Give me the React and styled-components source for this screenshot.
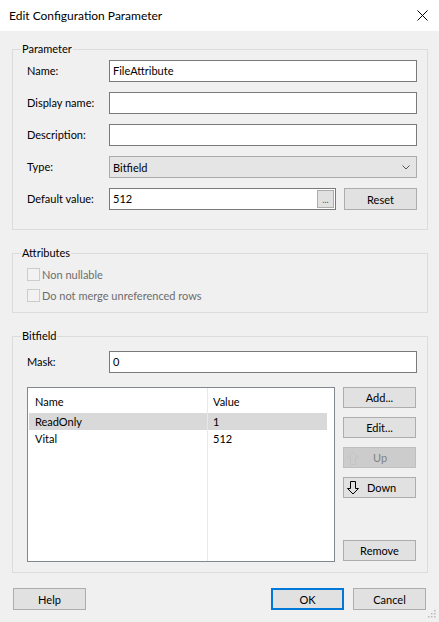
import React from "react";
import styled, { createGlobalStyle, css } from "styled-components";

const Global = createGlobalStyle`
  html, body { margin: 0; padding: 0; background: #f0f0f0; }
  body { font-family: Lato, "Segoe UI", sans-serif; font-size: 11px; color: #000; }
  * { box-sizing: border-box; }
`;

const Window = styled.div`
  width: 439px;
  height: 622px;
  background: #f0f0f0;
  display: flex;
  flex-direction: column;
  position: relative;
  overflow: hidden;
`;

const TitleBar = styled.div`
  height: 31px;
  flex: none;
  background: #fff;
  display: flex;
  align-items: center;
  justify-content: space-between;
  padding: 0 11px 1px 9px;
  font-size: 12px;
`;

const Body = styled.div`
  display: flex;
  flex-direction: column;
  padding: 10px 11px 0 12px;
`;

const Group = styled.fieldset`
  margin: 0;
  margin-top: ${(p) => p.$top || 0}px;
  padding: 0;
  border: 1px solid #dcdcdc;
  min-width: 0;
`;

const Legend = styled.legend`
  margin-left: 8px;
  padding: 0 1px;
  line-height: 16px;
  height: 16px;
`;

const GroupInner = styled.div`
  padding: ${(p) => p.$pad};
`;

const FormGrid = styled.div`
  display: grid;
  grid-template-columns: 82px 1fr;
  row-gap: 10px;
  align-items: center;
`;

const Label = styled.div`
  line-height: 22px;
`;

const TextBox = styled.div`
  height: 22px;
  background: #fff;
  border: 1px solid #7a7a7a;
  padding: 0 3px;
  line-height: 20px;
  display: flex;
  align-items: center;
  flex: ${(p) => (p.$grow ? 1 : "none")};
  gap: 4px;
`;

const BoxText = styled.span`
  flex: 1;
`;

const Combo = styled.div`
  height: 22px;
  background: #e5e5e5;
  border: 1px solid #acacac;
  padding: 0 6px 0 3px;
  display: flex;
  align-items: center;
  justify-content: space-between;
`;

const Row = styled.div`
  display: flex;
  gap: 8px;
  align-items: center;
`;

const Button = styled.div`
  width: 73px;
  height: ${(p) => p.$h || 21}px;
  background: #e1e1e1;
  border: 1px solid #adadad;
  display: flex;
  align-items: center;
  justify-content: center;
  color: #000;
  padding: 0;
  ${(p) =>
    p.$default &&
    css`
      border: 2px solid #0078d7;
    `}
  ${(p) =>
    p.$disabled &&
    css`
      background: #cccccc;
      border-color: #bfbfbf;
      color: #838383;
    `}
  ${(p) => p.$icon && css`justify-content: flex-start; padding-left: 3px; gap: 8px;`}
  ${(p) => p.$push && css`margin-top: auto;`}
`;

const EllipsisButton = styled.div`
  width: 17px;
  height: 18px;
  background: #e1e1e1;
  border: 1px solid #adadad;
  font-size: 9px;
  color: #555;
  display: flex;
  align-items: flex-end;
  justify-content: center;
  padding-bottom: 3px;
  line-height: 1;
  margin-right: -2px;
`;

const CheckRow = styled.div`
  height: 21px;
  display: flex;
  align-items: center;
  gap: 2px;
  color: #6d6d6d;
`;

const CheckBox = styled.span`
  width: 13px;
  height: 13px;
  border: 1px solid #cccccc;
  background: #f2f2f2;
  flex: none;
`;

const BitfieldBody = styled.div`
  display: flex;
  flex-direction: column;
  padding: 7px 10px 10px 14px;
`;

const ListArea = styled.div`
  display: flex;
  gap: 8px;
  margin-top: 14px;
  height: 175px;
`;

const ListBox = styled.div`
  width: 308px;
  border: 1px solid #828790;
  background: #fff;
  padding: 0 1px;
  position: relative;
  display: grid;
  grid-template-columns: 178px 120px;
  grid-template-rows: 25px;
  grid-auto-rows: 17px;
  align-content: start;
`;

const HeaderCell = styled.div`
  display: flex;
  align-items: center;
  padding-left: 6px;
  padding-top: 1px;
`;

const Cell = styled.div`
  height: 17px;
  line-height: 17px;
  padding-left: 6px;
  background: ${(p) => (p.$sel ? "#d9d9d9" : "transparent")};
`;

const ColumnRule = styled.div`
  position: absolute;
  left: 179px;
  top: 0;
  bottom: 0;
  width: 1px;
  background: #e8e8e8;
`;

const ButtonColumn = styled.div`
  display: flex;
  flex-direction: column;
  gap: 9px;
  padding-bottom: 1px;
`;

const Footer = styled.div`
  margin-top: 15px;
  display: flex;
  gap: 9px;
  padding: 0 2px 0 1px;
`;

const Spacer = styled.div`
  flex: 1;
`;

const Grip = styled.svg`
  position: absolute;
  right: 3px;
  bottom: 4px;
`;

const CloseIcon = () => (
  <svg width="11" height="11" viewBox="0 0 11 11">
    <path d="M0.5 0.5 L10.5 10.5 M10.5 0.5 L0.5 10.5" stroke="#000" strokeWidth="1" />
  </svg>
);

const Chevron = () => (
  <svg width="8" height="5" viewBox="0 0 8 5">
    <path d="M0.5 0.5 L4 4 L7.5 0.5" stroke="#555" strokeWidth="1" fill="none" />
  </svg>
);

const ArrowIcon = ({ up, color }) => (
  <svg width="12" height="14" viewBox="0 0 12 14" style={{ transform: up ? "rotate(180deg)" : "none" }}>
    <path
      d="M3.5 0.5 H8.5 V7.5 H11.5 L6 13 L0.5 7.5 H3.5 Z"
      stroke={color}
      strokeWidth="1"
      fill="none"
      strokeLinejoin="miter"
    />
  </svg>
);

const rows = [
  { name: "ReadOnly", value: "1", sel: true },
  { name: "Vital", value: "512" },
];

export default function App() {
  return (
    <>
      <Global />
      <Window>
        <TitleBar>
          <span>Edit Configuration Parameter</span>
          <CloseIcon />
        </TitleBar>
        <Body>
          <Group>
            <Legend>Parameter</Legend>
            <GroupInner $pad="3px 10px 19px 14px">
              <FormGrid>
                <Label>Name:</Label>
                <TextBox>FileAttribute</TextBox>
                <Label>Display name:</Label>
                <TextBox />
                <Label>Description:</Label>
                <TextBox />
                <Label>Type:</Label>
                <Combo>
                  <span>Bitfield</span>
                  <Chevron />
                </Combo>
                <Label>Default value:</Label>
                <Row>
                  <TextBox $grow>
                    <BoxText>512</BoxText>
                    <EllipsisButton>...</EllipsisButton>
                  </TextBox>
                  <Button $h={22}>Reset</Button>
                </Row>
              </FormGrid>
            </GroupInner>
          </Group>

          <Group $top={15}>
            <Legend>Attributes</Legend>
            <GroupInner $pad="3px 10px 6px 14px">
              <CheckRow>
                <CheckBox />
                Non nullable
              </CheckRow>
              <CheckRow>
                <CheckBox />
                Do not merge unreferenced rows
              </CheckRow>
            </GroupInner>
          </Group>

          <Group $top={15}>
            <Legend>Bitfield</Legend>
            <BitfieldBody>
              <FormGrid>
                <Label>Mask:</Label>
                <TextBox>0</TextBox>
              </FormGrid>
              <ListArea>
                <ListBox>
                  <ColumnRule />
                  <HeaderCell>Name</HeaderCell>
                  <HeaderCell>Value</HeaderCell>
                  {rows.map((r) => (
                    <React.Fragment key={r.name}>
                      <Cell $sel={r.sel}>{r.name}</Cell>
                      <Cell $sel={r.sel}>{r.value}</Cell>
                    </React.Fragment>
                  ))}
                </ListBox>
                <ButtonColumn>
                  <Button>Add...</Button>
                  <Button>Edit...</Button>
                  <Button $disabled $icon>
                    <ArrowIcon up color="#c4c4c4" />
                    <span style={{ marginLeft: 6 }}>Up</span>
                  </Button>
                  <Button $icon>
                    <ArrowIcon color="#000" />
                    <span>Down</span>
                  </Button>
                  <Button $push>Remove</Button>
                </ButtonColumn>
              </ListArea>
            </BitfieldBody>
          </Group>

          <Footer>
            <Button $h={22}>Help</Button>
            <Spacer />
            <Button $h={22} $default>OK</Button>
            <Button $h={22}>Cancel</Button>
          </Footer>
        </Body>
        <Grip width="9" height="9" viewBox="0 0 9 9">
          {[
            [7, 1],
            [4, 4],
            [7, 4],
            [1, 7],
            [4, 7],
            [7, 7],
          ].map(([x, y]) => (
            <rect key={`${x}-${y}`} x={x} y={y} width="1.5" height="1.5" fill="#b8b8b8" />
          ))}
        </Grip>
      </Window>
    </>
  );
}
